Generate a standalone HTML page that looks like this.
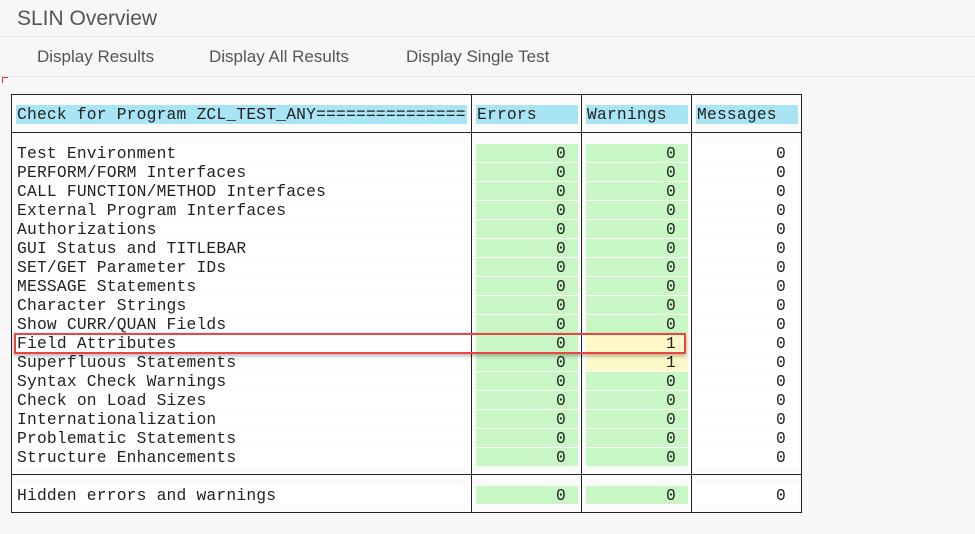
<!DOCTYPE html>
<html><head><meta charset="utf-8"><style>
*{margin:0;padding:0;box-sizing:border-box}
body{width:975px;height:534px;background:#f7f7f7;position:relative;overflow:hidden;font-family:"Liberation Sans",sans-serif}
.a{position:absolute}
.t{font-size:21px;color:#555;left:17px;top:7px}
.tb{font-size:17px;color:#555;top:47px}
.m{font-family:"Liberation Mono",monospace;font-size:16.3px;letter-spacing:0.2px;color:#222;line-height:19px;white-space:pre}
.hl{background:#a8e4f4;height:19px;top:105px}
.g{background:#c8f7c5}
.y{background:#fff8c8}
.w{background:#fff}
.n{text-align:right;padding-right:12px}
</style></head><body>
<div class="a t">SLIN Overview</div>
<div class="a" style="left:0;top:36px;width:975px;height:1px;background:#e4e4e4"></div>
<div class="a tb" style="left:37px">Display Results</div>
<div class="a tb" style="left:209px">Display All Results</div>
<div class="a tb" style="left:406px">Display Single Test</div>
<div class="a" style="left:0;top:76px;width:975px;height:1px;background:#e4e4e4"></div>
<div class="a" style="left:2px;top:77px;width:6px;height:1px;background:#d33"></div>
<div class="a" style="left:2px;top:77px;width:1px;height:6px;background:#d33"></div>

<div class="a" style="left:11px;top:94px;width:791px;height:419px;border:1px solid #222;background:#fbfbfb"></div>
<div class="a" style="left:471px;top:94px;width:1px;height:419px;background:#222"></div>
<div class="a" style="left:581px;top:94px;width:1px;height:419px;background:#222"></div>
<div class="a" style="left:691px;top:94px;width:1px;height:419px;background:#222"></div>
<div class="a" style="left:11px;top:132px;width:791px;height:1px;background:#222"></div>
<div class="a" style="left:11px;top:474px;width:791px;height:1px;background:#222"></div>

<div class="a m hl" style="left:16px;width:451px;padding-left:1px;overflow:hidden">Check for Program ZCL_TEST_ANY===============</div>
<div class="a m hl" style="left:476px;width:102px;padding-left:1px">Errors</div>
<div class="a m hl" style="left:586px;width:102px;padding-left:1px">Warnings</div>
<div class="a m hl" style="left:696px;width:102px;padding-left:1px">Messages</div>

<div id="rows"></div>
<script>
var L=["Test Environment","PERFORM/FORM Interfaces","CALL FUNCTION/METHOD Interfaces","External Program Interfaces","Authorizations","GUI Status and TITLEBAR","SET/GET Parameter IDs","MESSAGE Statements","Character Strings","Show CURR/QUAN Fields","Field Attributes","Superfluous Statements","Syntax Check Warnings","Check on Load Sizes","Internationalization","Problematic Statements","Structure Enhancements"];
var h="";
function row(y,l,w){
h+='<div class="a m w" style="left:16px;top:'+y+'px;width:451px;height:18px;padding-left:1px">'+l+'</div>';
h+='<div class="a m g n" style="left:476px;top:'+y+'px;width:102px;height:18px">0</div>';
h+='<div class="a m '+(w?'y':'g')+' n" style="left:586px;top:'+y+'px;width:102px;height:18px">'+(w?1:0)+'</div>';
h+='<div class="a m w n" style="left:696px;top:'+y+'px;width:102px;height:18px">0</div>';
}
L.forEach(function(l,i){row(144+i*19,l,i==10||i==11)});
row(486,"Hidden errors and warnings",0);
document.getElementById("rows").innerHTML=h;
</script>
<div class="a" style="left:14px;top:333px;width:672px;height:21px;border:2px solid #e84545;box-shadow:0 2px 4px rgba(0,0,0,.3)"></div>
</body></html>
